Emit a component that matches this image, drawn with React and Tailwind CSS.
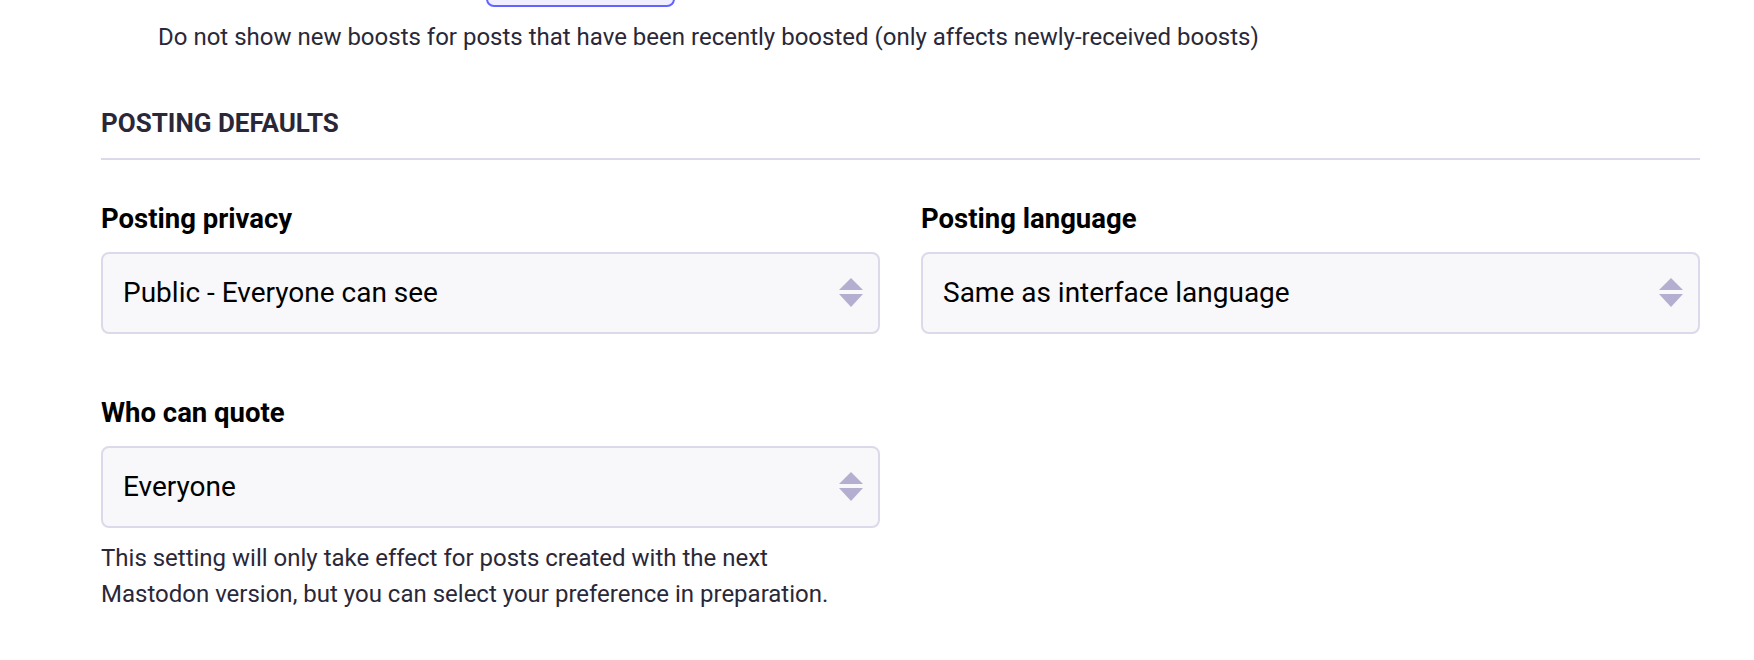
import React from "react";

const font = { fontFamily: "Roboto, 'Noto Sans', sans-serif" };

const SelectArrows = () => (
  <svg width="26" height="30" viewBox="0 0 26 30" className="shrink-0">
    <path d="M13 0 L25 12 L1 12 Z" fill="#b4aed0" />
    <path d="M1 16 L25 16 L13 29 Z" fill="#b4aed0" />
  </svg>
);

const Select = ({ value }) => (
  <div className="flex items-center justify-between h-[82px] pl-[20px] pr-[14px] bg-[#f8f8fb] border-2 border-[#dcd9ea] rounded-[8px]">
    <span className="text-[28px] text-black">{value}</span>
    <SelectArrows />
  </div>
);

const Field = ({ label, value, children }) => (
  <div className="flex flex-col">
    <label className="text-[27.5px] leading-[30px] font-bold text-black mb-[18px]">{label}</label>
    <Select value={value} />
    {children}
  </div>
);

export default function App() {
  return (
    <div className="w-[1754px] h-[660px] bg-white overflow-hidden" style={font}>
      <div className="pl-[101px] pr-[54px]">
        {/* cut-off row above */}
        <div className="flex h-[7px]">
          <div className="ml-[385px] w-[189px] h-[48px] -mt-[41px] bg-[#f0efff] border-2 border-[#6364ff] rounded-[8px]" />
        </div>
        <p className="ml-[57px] mt-[15px] text-[24px] leading-[30px] text-[#2a2838]">
          Do not show new boosts for posts that have been recently boosted (only affects newly-received boosts)
        </p>

        {/* Posting defaults */}
        <h4 className="mt-[56px] text-[26px] leading-[30px] font-bold uppercase text-[#2a2838] pb-[20px] border-b-2 border-[#dcd9ea]">
          Posting defaults
        </h4>

        <div className="grid grid-cols-2 gap-x-[41px] mt-[44px]">
          <Field label="Posting privacy" value="Public - Everyone can see" />
          <Field label="Posting language" value="Same as interface language" />
        </div>

        <div className="grid grid-cols-2 gap-x-[41px] mt-[64px]">
          <Field label="Who can quote" value="Everyone">
            <p className="mt-[12px] text-[24px] leading-[36px] text-[#2a2838]">
              This setting will only take effect for posts created with the next
              <br />
              Mastodon version, but you can select your preference in preparation.
            </p>
          </Field>
        </div>
      </div>
    </div>
  );
}
